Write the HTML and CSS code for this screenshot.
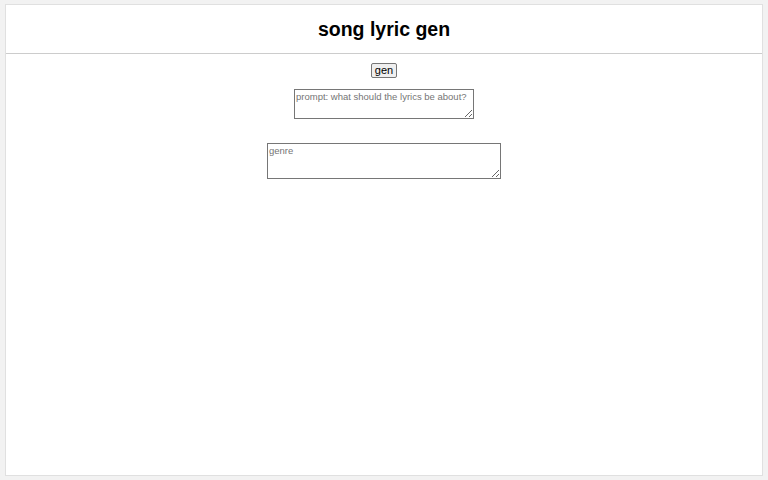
FILE: index.html
```html
<!DOCTYPE html>
<html>
<head>
<meta charset="utf-8">
<link rel="stylesheet" href="styles.css">
</head>
<body>
<div class="card">
  <header class="head"><h1 class="title">song lyric gen</h1></header>
  <main class="content">
    <button class="gen">gen</button>
    <textarea class="prompt" placeholder="prompt: what should the lyrics be about?"></textarea>
    <textarea class="genre" placeholder="genre"></textarea>
  </main>
</div>
</body>
</html>
```

FILE: styles.css
```css
html, body { margin: 0; padding: 0; }
body {
  background: #f2f2f2;
  font-family: "Liberation Sans", Arial, sans-serif;
  padding: 4px 4px 4px 5px;
  height: 480px;
  box-sizing: border-box;
}
.card {
  background: #fff;
  border: 1px solid #e0e0e0;
  height: 472px;
  width: 758px;
  box-sizing: border-box;
  display: flex;
  flex-direction: column;
}
.head {
  height: 48px;
  border-bottom: 1px solid #cccccc;
  display: flex;
  align-items: center;
  justify-content: center;
}
.title {
  margin: 0;
  font-size: 19.5px;
  font-weight: bold;
  color: #000;
}
.content {
  display: flex;
  flex-direction: column;
  align-items: center;
  padding-top: 9px;
}
.gen {
  font-family: "Liberation Sans", Arial, sans-serif;
  font-size: 11px;
  padding: 1px 3px;
  height: 15px;
  line-height: 11px;
  border: 1px solid #767676;
  border-radius: 2px;
  background: #efefef;
  color: #000;
}
textarea {
  font-family: "Liberation Sans", Arial, sans-serif;
  font-size: 9.5px;
  border: 1px solid #767676;
  padding: 1px 1px;
  box-sizing: border-box;
  overflow: hidden;
}
textarea::placeholder { color: #757575; }
.prompt {
  margin-top: 11px;
  width: 180px;
  height: 30px;
}
.genre {
  margin-top: 24px;
  width: 234px;
  height: 36px;
}
```
